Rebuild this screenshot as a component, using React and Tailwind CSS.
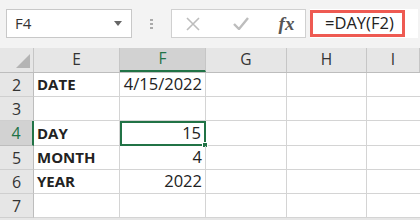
import React from "react";

const cols = [
  { name: "E", w: "w-[86px]" },
  { name: "F", w: "w-[86px]" },
  { name: "G", w: "w-[81px]" },
  { name: "H", w: "w-[80px]" },
  { name: "I", w: "flex-1" },
];

const rows = [
  { n: "2", e: "DATE", f: "4/15/2022" },
  { n: "3", e: "", f: "" },
  { n: "4", e: "DAY", f: "15", sel: true },
  { n: "5", e: "MONTH", f: "4" },
  { n: "6", e: "YEAR", f: "2022" },
  { n: "7", e: "", f: "" },
];

export default function App() {
  return (
    <div className="w-[420px] h-[220px] overflow-hidden bg-[#e6e6e6] text-[#222]" style={{ fontFamily: '"Open Sans", "Liberation Sans", sans-serif' }}>
      {/* toolbar */}
      <div className="h-[48px] bg-[#f3f3f3] flex items-start pt-[9px] pl-[6px]">
        <div className="w-[126px] h-[29px] bg-white border border-[#c8c8c8] flex items-center justify-between pl-[8px] pr-[9px]">
          <span className="text-[15px] text-[#333]">F4</span>
          <svg width="8" height="5" viewBox="0 0 8 5"><path d="M0 0h8L4 5z" fill="#666" /></svg>
        </div>
        <div className="w-[39px] h-[29px] flex flex-col items-center justify-center gap-[2px]">
          <div className="w-[3px] h-[2px] bg-[#aaa]" />
          <div className="w-[3px] h-[2px] bg-[#aaa]" />
          <div className="w-[3px] h-[2px] bg-[#aaa]" />
        </div>
        <div className="w-[135px] h-[29px] bg-white border border-[#d0d0d0] flex items-center">
          <div className="w-[42px] flex justify-center">
            <svg width="14" height="14" viewBox="0 0 14 14"><path d="M1 1l12 12M13 1L1 13" stroke="#bdbdbd" strokeWidth="1.6" /></svg>
          </div>
          <div className="w-[54px] flex justify-center">
            <svg width="16" height="13" viewBox="0 0 16 13"><path d="M1 7l5 5L15 1" stroke="#bdbdbd" strokeWidth="2.4" fill="none" /></svg>
          </div>
          <div className="flex-1 flex justify-center">
            <span className="text-[19px] italic font-bold text-[#555] leading-none" style={{ fontFamily: '"Liberation Serif", serif' }}>fx</span>
          </div>
        </div>
        <div className="ml-[4px] w-[108px] h-[29px] bg-white relative">
          <div className="absolute left-0 top-[1px] w-[95px] h-[27px] border-[3px] border-[#ee5a52] flex items-center pl-[12px]">
            <span className="text-[16.5px] text-[#222]">=DAY(F2)</span>
          </div>
        </div>
      </div>
      {/* header row */}
      <div className="flex h-[25px] bg-[#e6e6e6] border-b border-[#bdbdbd]">
        <div className="w-[34px] border-r border-[#c6c6c6] relative">
          <svg className="absolute left-[16px] top-[6px]" width="14" height="14" viewBox="0 0 14 14"><path d="M14 0v14H0z" fill="#b4b4b4" /></svg>
        </div>
        {cols.map((c) => (
          <div
            key={c.name}
            className={`${c.w} flex items-center justify-center text-[15.5px] border-r border-[#c6c6c6] ${c.name === "F" ? "bg-[#d2d2d2] text-[#217346] border-b-[2px] border-b-[#217346]" : "text-[#333]"}`}
          >
            {c.name}
          </div>
        ))}
      </div>
      {rows.map((r) => (
        <div key={r.n} className={`flex ${r.sel ? "h-[25px]" : "h-[24px]"} bg-white`}>
          <div className={`w-[34px] flex items-center justify-center text-[16px] border-b ${r.sel ? "bg-[#d2d2d2] text-[#217346] border-r-[2px] border-r-[#217346] border-b-[#bdbdbd]" : "bg-[#e6e6e6] text-[#333] border-r border-[#bdbdbd] border-b-[#cfcfcf]"}`}>
            {r.n}
          </div>
          <div className="w-[86px] flex items-center pl-[3px] text-[15px] font-bold border-r border-b border-[#d4d4d4]">
            {r.e}
          </div>
          <div className={`w-[86px] flex items-center justify-end pr-[3px] text-[16.5px] relative ${r.sel ? "border-[2px] border-[#217346]" : "border-r border-b border-[#d4d4d4]"}`}>
            {r.f}
            {r.sel && <div className="absolute right-[-4px] bottom-[-4px] w-[6px] h-[6px] bg-[#217346] border border-white" />}
          </div>
          <div className="w-[81px] border-r border-b border-[#d4d4d4]" />
          <div className="w-[80px] border-r border-b border-[#d4d4d4]" />
          <div className="flex-1 border-b border-[#d4d4d4]" />
        </div>
      ))}
    </div>
  );
}
